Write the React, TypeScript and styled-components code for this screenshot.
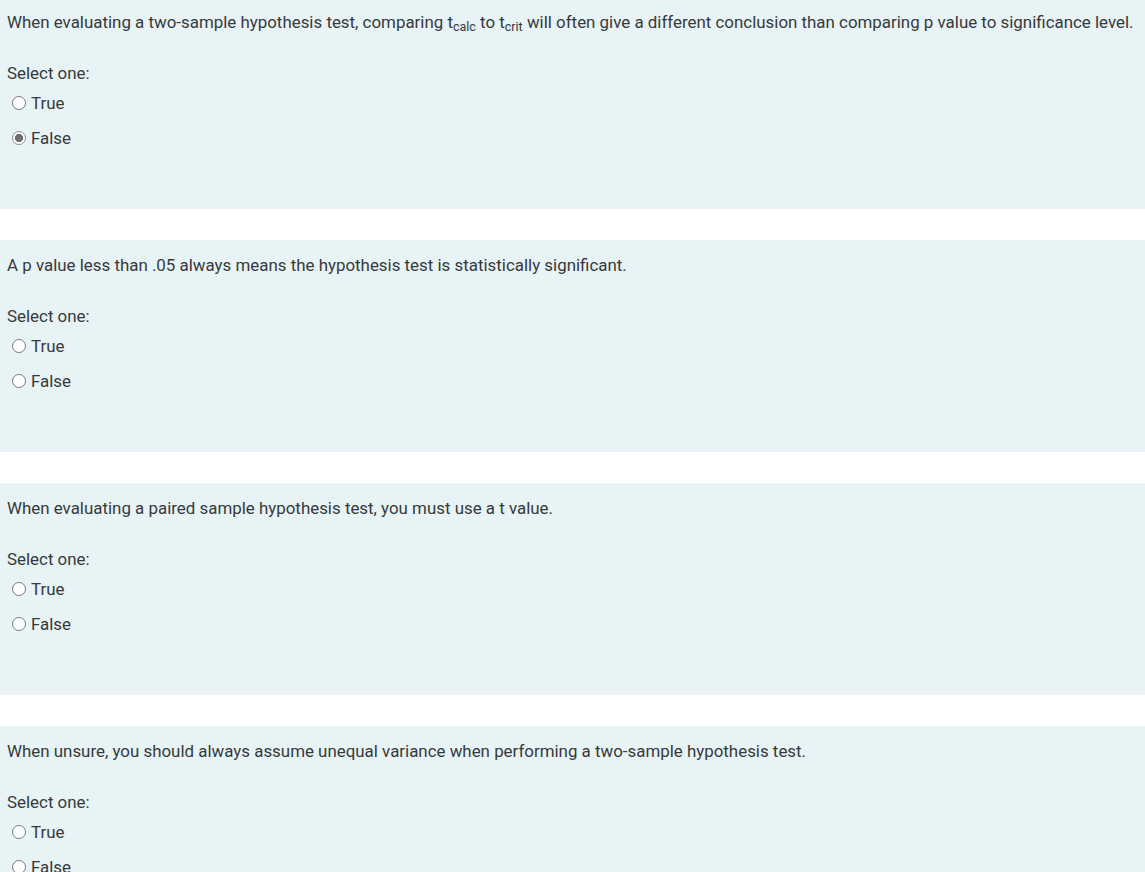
import React from "react";
import styled, { createGlobalStyle } from "styled-components";

const Global = createGlobalStyle`
  html, body { margin: 0; padding: 0; background: #ffffff; }
  body {
    font-family: Roboto, "Helvetica Neue", Arial, sans-serif;
    color: #373a3c;
    overflow: hidden;
  }
`;

const Page = styled.div`
  display: flex;
  flex-direction: column;
  gap: 31px;
  margin-top: -3px;
`;

const Panel = styled.section`
  background: #e7f3f5;
  height: 212px;
  box-sizing: border-box;
  padding: 14px 7px 0;
  display: flex;
  flex-direction: column;
`;

const QText = styled.div`
  font-size: 16.9px;
  line-height: 22px;
  white-space: nowrap;
`;

const Sub = styled.sub`
  font-size: 12.5px;
  line-height: 0;
  vertical-align: -3px;
`;

const Prompt = styled.div`
  font-size: 16.9px;
  line-height: 22px;
  margin-top: 29px;
`;

const Options = styled.div`
  display: flex;
  flex-direction: column;
  gap: 13px;
  margin-top: 8px;
  padding-left: 5px;
`;

const Option = styled.label`
  display: flex;
  align-items: center;
  gap: 5px;
  font-size: 16.9px;
  line-height: 22px;
`;

const Radio = styled.span<{ $checked?: boolean }>`
  width: 14px;
  height: 14px;
  box-sizing: border-box;
  border-radius: 50%;
  border: 1px solid ${(p) => (p.$checked ? "#8d8d8d" : "#7a7a7a")};
  background: ${(p) =>
    p.$checked
      ? "radial-gradient(circle, #6e6e6e 0 3.8px, #ffffff 4.4px)"
      : "#ffffff"};
  flex: none;
`;

type Q = { text: React.ReactNode; checked?: "True" | "False" };

const questions: Q[] = [
  {
    text: (
      <>
        When evaluating a two-sample hypothesis test, comparing t<Sub>calc</Sub> to t
        <Sub>crit</Sub> will often give a different conclusion than comparing p value to
        significance level.
      </>
    ),
    checked: "False",
  },
  { text: "A p value less than .05 always means the hypothesis test is statistically significant." },
  { text: "When evaluating a paired sample hypothesis test, you must use a t value." },
  {
    text: "When unsure, you should always assume unequal variance when performing a two-sample hypothesis test.",
  },
];

export default function App() {
  return (
    <>
      <Global />
      <Page>
        {questions.map((q, i) => (
          <Panel key={i}>
            <QText>{q.text}</QText>
            <Prompt>Select one:</Prompt>
            <Options>
              {(["True", "False"] as const).map((o) => (
                <Option key={o}>
                  <Radio $checked={q.checked === o} />
                  {o}
                </Option>
              ))}
            </Options>
          </Panel>
        ))}
      </Page>
    </>
  );
}
